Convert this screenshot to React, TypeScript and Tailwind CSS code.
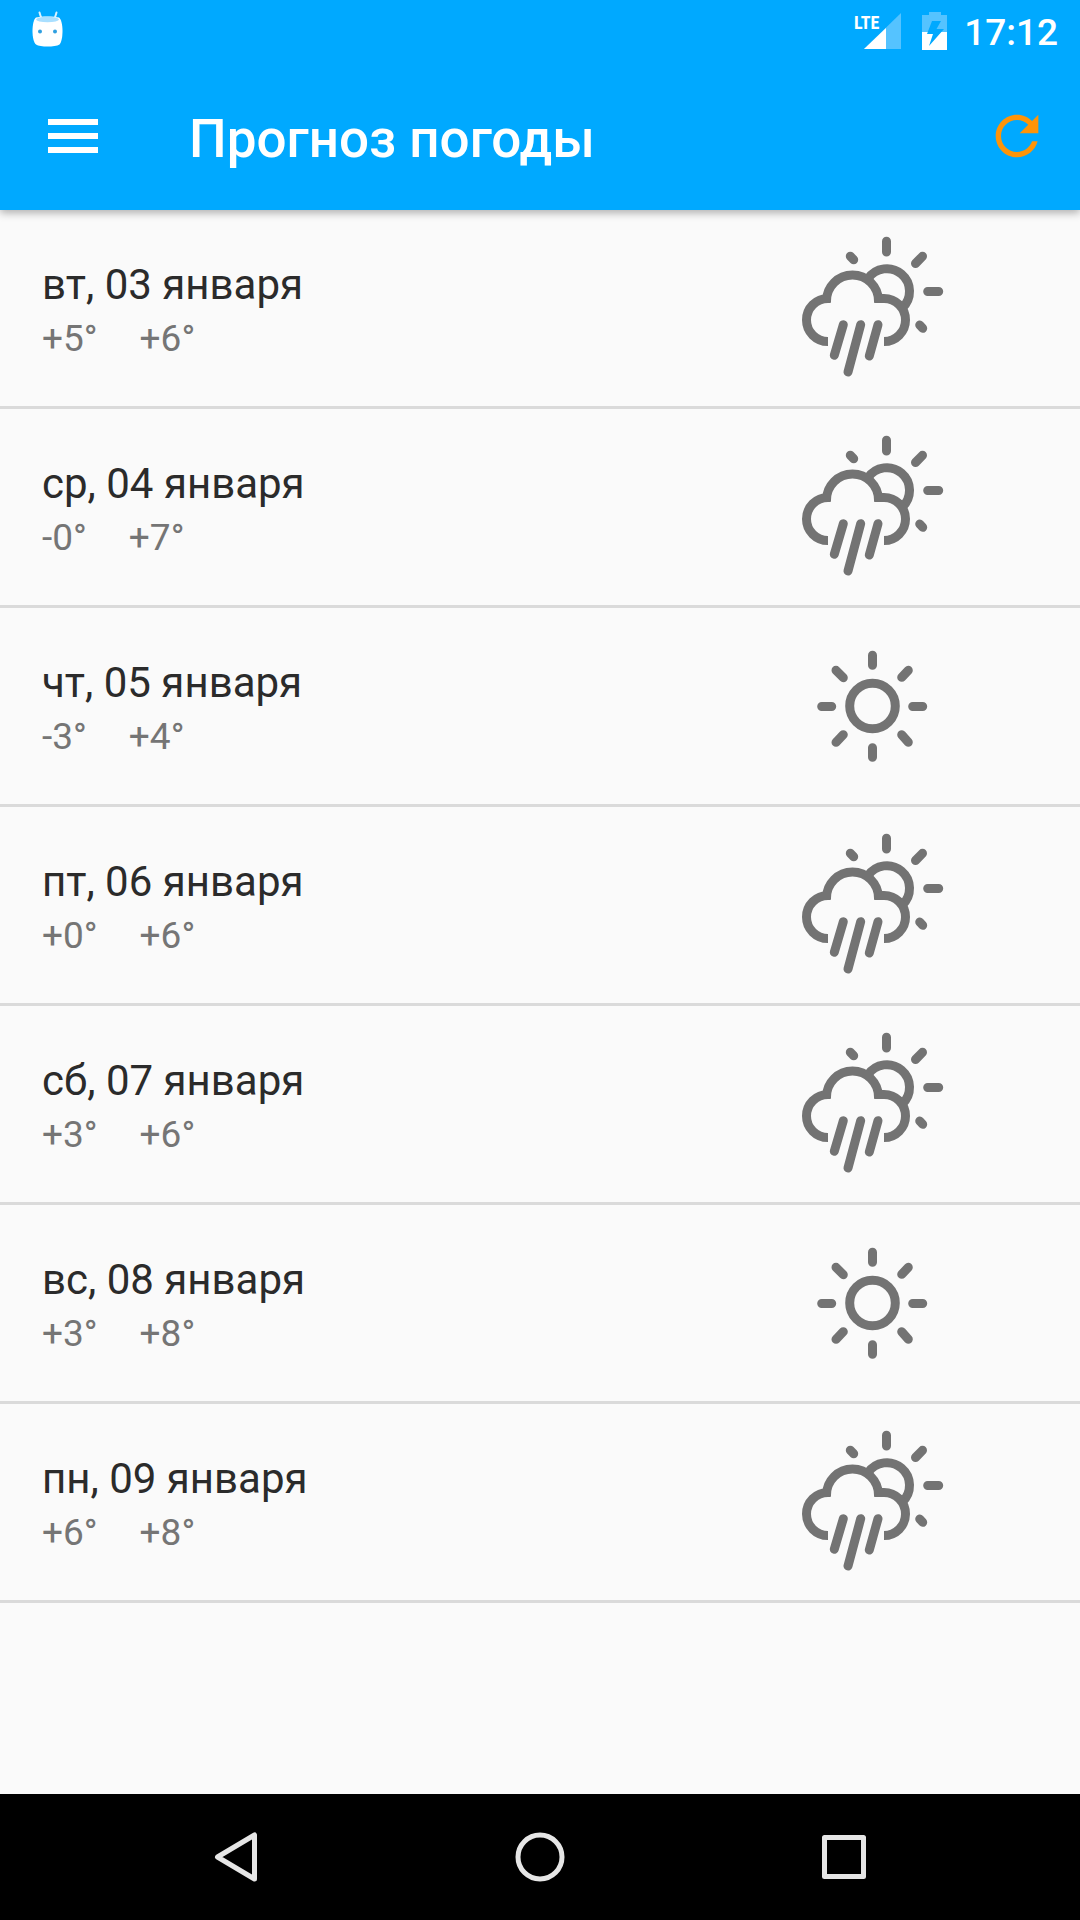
import React from 'react';

type Weather = 'rain' | 'sun';

interface Forecast {
  date: string;
  low: string;
  high: string;
  weather: Weather;
}

const forecasts: Forecast[] = [
  { date: 'вт, 03 января', low: '+5°', high: '+6°', weather: 'rain' },
  { date: 'ср, 04 января', low: '-0°', high: '+7°', weather: 'rain' },
  { date: 'чт, 05 января', low: '-3°', high: '+4°', weather: 'sun' },
  { date: 'пт, 06 января', low: '+0°', high: '+6°', weather: 'rain' },
  { date: 'сб, 07 января', low: '+3°', high: '+6°', weather: 'rain' },
  { date: 'вс, 08 января', low: '+3°', high: '+8°', weather: 'sun' },
  { date: 'пн, 09 января', low: '+6°', high: '+8°', weather: 'rain' },
];

const RainIcon = () => (
  <svg className="size-[180px]" viewBox="0 0 180 180" fill="none" stroke="currentColor" strokeWidth={9} aria-hidden="true">
    {/* Sun behind the cloud */}
    <path d="M86 60.7A22.7 22.7 0 1 1 120.3 90" />
    <path
      strokeLinecap="round"
      d="M104.5 23.3V34M140.5 38.3L133.5 45.5M145.7 73.5H156.7M137.7 107L140.7 110.3M68.3 38.3L71.7 41.7"
    />
    {/* Cloud */}
    <path d="M46 123.5A21.5 21.5 0 0 1 46 80.5H48M44.5 84.7V83A26 26 0 0 1 96.5 83V84.7M92.7 80.5H102A21.5 21.5 0 0 1 102 123.5" />
    {/* Rain */}
    <path strokeLinecap="round" d="M61.3 106.7L52.3 137.3M78.7 106.7L66 154M96 106.7L87.3 138" />
  </svg>
);

const SunIcon = () => (
  <svg className="size-[180px]" viewBox="0 0 180 180" fill="none" stroke="currentColor" strokeWidth={9} aria-hidden="true">
    <circle cx={90.5} cy={90} r={22.8} />
    <path
      strokeLinecap="round"
      d="M90.5 39.3V49.3M90.5 131.7V141.3M39.7 90.5H49.7M130.7 90.5H140.7M54 54.3L61.3 61.7M126.3 54.3L119.7 61.3M61.3 118.7L54 126.3M119.7 118.7L126.3 126.3"
    />
  </svg>
);

const StatusBar = () => (
  <div className="flex h-16 items-center justify-between pl-8 pr-[22px]">
    <svg className="h-12 w-8" viewBox="0 0 32 48" aria-hidden="true">
      <path d="M7.5 4.5L9.5 11M24.5 4.5L22.5 11" stroke="#d9f2ff" strokeWidth={2} strokeLinecap="round" />
      <path
        d="M4 9.5C8 8 23 8 27 9.5C29 11 30.5 16 30.5 23C30.5 29 29.5 34 27.5 36.5C23 39.3 8 39.3 4 36.5C1.5 34 0.5 29 0.5 23C0.5 16 2 11 4 9.5Z"
        fill="#ffffff"
      />
      <ellipse cx={15.5} cy={11.5} rx={11.5} ry={2.8} fill="#a9dfff" />
      <circle cx={8} cy={23.5} r={2} fill="#2f9fe0" />
      <circle cx={23} cy={23.5} r={2} fill="#2f9fe0" />
    </svg>
    <div className="flex items-center">
      <svg className="mr-5 h-12 w-12" viewBox="0 0 48 48" aria-hidden="true">
        <path d="M47 5V41H10Z" fill="#55c3ff" />
        <path d="M32 20V41H10Z" fill="#ffffff" />
        <text
          x={0}
          y={21}
          fill="#ffffff"
          fontSize={18}
          fontWeight={700}
          fontFamily="'Roboto Condensed', Roboto, sans-serif"
        >
          LTE
        </text>
      </svg>
      <svg className="mr-4 h-12 w-[26px]" viewBox="0 0 26 48" aria-hidden="true">
        <path d="M7 4H19V7H25V24H0V7H7Z" fill="#55c3ff" />
        <path d="M0 24H25V42H0Z" fill="#ffffff" />
        <path d="M10 13H19L14.5 21H22L7 38L11 26H5Z" fill="#00a9ff" />
      </svg>
      <span className="pt-0.5 text-[37px] leading-12 font-medium text-white">17:12</span>
    </div>
  </div>
);

const Toolbar = () => (
  <div className="flex h-[146px] items-center pb-0.5 pl-12 pr-[31px]">
    <button type="button" className="flex flex-col gap-2 py-4" aria-label="Меню">
      <span className="h-1.5 w-[50px] bg-white" />
      <span className="h-1.5 w-[50px] bg-white" />
      <span className="h-1.5 w-[50px] bg-white" />
    </button>
    <h1 className="ml-[91px] flex-1 pt-1.5 text-[53px] leading-16 font-medium text-white">Прогноз погоды</h1>
    <button type="button" aria-label="Обновить">
      <svg className="size-16" viewBox="0 0 24 24" fill="#ff9408">
        <path d="M17.65 6.35C16.2 4.9 14.21 4 12 4c-4.42 0-7.99 3.58-7.99 8s3.57 8 7.99 8c3.73 0 6.84-2.55 7.73-6h-2.08c-.82 2.33-3.04 4-5.65 4-3.31 0-6-2.69-6-6s2.69-6 6-6c1.66 0 3.14.69 4.22 1.78L13 11h7V4l-2.35 2.35z" />
      </svg>
    </button>
  </div>
);

const ForecastRow: React.FC<{ item: Forecast }> = ({ item }) => (
  <li className="flex items-center justify-between border-b-3 border-[#dadada] py-2 pl-[42px] pr-[118px]">
    <div className="pt-1.5">
      <p className="text-[42px] leading-14 text-[#2b2b2b]">{item.date}</p>
      <p className="flex gap-[42px] text-[37px] leading-[52px] text-[#757575]">
        <span>{item.low}</span>
        <span>{item.high}</span>
      </p>
    </div>
    <div className="text-[#737373]">{item.weather === 'rain' ? <RainIcon /> : <SunIcon />}</div>
  </li>
);

const NavigationBar = () => (
  <nav className="flex justify-center gap-[240px] bg-black py-[31px]">
    <button type="button" aria-label="Назад">
      <svg className="size-16" viewBox="0 0 64 64" fill="none" stroke="#e6e6e6" strokeWidth={5} strokeLinejoin="round">
        <path d="M50.5 10V54L13.5 32Z" />
      </svg>
    </button>
    <button type="button" aria-label="Домой">
      <svg className="size-16" viewBox="0 0 64 64" fill="none" stroke="#e6e6e6" strokeWidth={5}>
        <circle cx={32} cy={32} r={22} />
      </svg>
    </button>
    <button type="button" aria-label="Недавние приложения">
      <svg className="size-16" viewBox="0 0 64 64" fill="none" stroke="#e6e6e6" strokeWidth={5} strokeLinejoin="round">
        <rect x={12.5} y={12.5} width={39} height={39} />
      </svg>
    </button>
  </nav>
);

const App: React.FC = () => {
  return (
    <div className="flex min-h-screen flex-col bg-[#fafafa] font-['Roboto',sans-serif]">
      <header className="relative bg-[#00a9ff] shadow-[0_3px_8px_rgba(0,0,0,0.3)]">
        <StatusBar />
        <Toolbar />
      </header>
      <main className="flex-1">
        <ul>
          {forecasts.map((item) => (
            <ForecastRow key={item.date} item={item} />
          ))}
        </ul>
      </main>
      <NavigationBar />
    </div>
  );
};

export default App;
